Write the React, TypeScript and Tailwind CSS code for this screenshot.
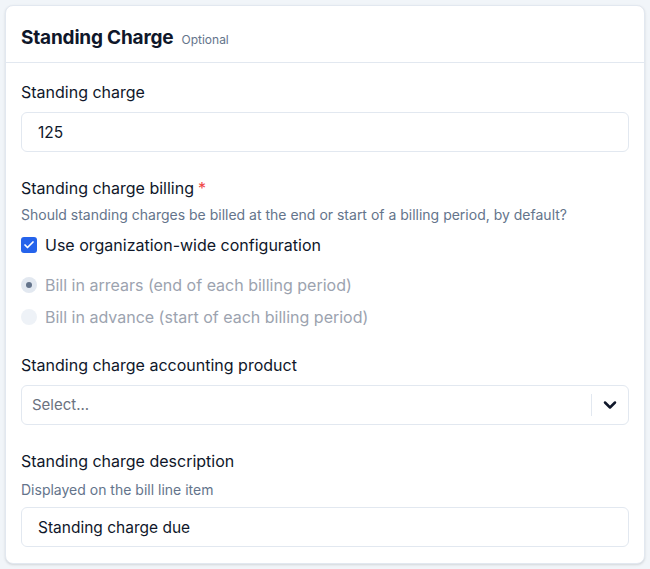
import React, { useState } from 'react';
import { ChevronDown, Check } from 'lucide-react';

const Label: React.FC<{ children: React.ReactNode; required?: boolean }> = ({ children, required }) => (
  <label className="block text-[16px] leading-6 text-[#0f172a]">
    {children}
    {required && <span className="ml-1 text-[#ef4444]">*</span>}
  </label>
);

const App: React.FC = () => {
  const [useOrg, setUseOrg] = useState(true);

  return (
    <div
      className="min-h-screen bg-[#f1f5f9] p-[5px]"
      style={{ fontFamily: 'Inter, "Noto Sans", sans-serif' }}
    >
      <div className="bg-white rounded-lg border border-[#e2e8f0] shadow-sm">
        <div className="h-[57px] pt-2 px-[15px] flex items-center gap-2 border-b border-[#e2e8f0]">
          <h2 className="text-[19px] font-bold text-[#0f172a] tracking-[-0.01em]">Standing Charge</h2>
          <span className="text-[12px] text-[#64748b] mt-1">Optional</span>
        </div>

        <div className="px-[15px] pt-[17px] pb-4">
          <Label>Standing charge</Label>
          <input
            defaultValue="125"
            className="mt-[8px] w-full h-10 px-4 rounded-md border border-[#e2e8f0] text-[15.5px] text-[#0f172a] outline-none"
          />

          <div className="mt-6">
            <Label required>Standing charge billing</Label>
            <p className="mt-[5px] text-[14px] leading-5 text-[#64748b]">
              Should standing charges be billed at the end or start of a billing period, by default?
            </p>
            <label className="mt-2 flex items-center gap-2 cursor-pointer">
              <button
                type="button"
                onClick={() => setUseOrg(!useOrg)}
                className={`w-4 h-4 rounded-[3px] flex items-center justify-center ${
                  useOrg ? 'bg-[#2563eb]' : 'border border-[#cbd5e1] bg-white'
                }`}
              >
                {useOrg && <Check className="w-3 h-3 text-white" strokeWidth={3.5} />}
              </button>
              <span className="text-[16px] leading-6 text-[#0f172a]">Use organization-wide configuration</span>
            </label>

            <div className="mt-4 space-y-2">
              <div className="flex items-center gap-2 h-6">
                <span className="w-4 h-4 rounded-full bg-[#e2e8f0] flex items-center justify-center">
                  <span className="w-[6px] h-[6px] rounded-full bg-[#64748b]" />
                </span>
                <span className="text-[16px] text-[#9ca3af]">Bill in arrears (end of each billing period)</span>
              </div>
              <div className="flex items-center gap-2 h-6">
                <span className="w-4 h-4 rounded-full bg-[#eef2f7]" />
                <span className="text-[16px] text-[#9ca3af]">Bill in advance (start of each billing period)</span>
              </div>
            </div>
          </div>

          <div className="mt-6">
            <Label>Standing charge accounting product</Label>
            <div className="mt-[8px] w-full h-10 pl-[10px] pr-2 rounded-md border border-[#e2e8f0] flex items-center">
              <span className="flex-1 text-[15px] text-[#6b7280]">Select...</span>
              <span className="w-px h-[22px] bg-[#e2e8f0]" />
              <span className="pl-[8px] flex items-center">
                <ChevronDown className="w-5 h-5 text-[#0f172a]" strokeWidth={3} />
              </span>
            </div>
          </div>

          <div className="mt-6">
            <Label>Standing charge description</Label>
            <p className="mt-[7px] text-[14px] leading-5 text-[#64748b]">Displayed on the bill line item</p>
            <input
              defaultValue="Standing charge due"
              className="mt-[7px] w-full h-10 px-4 rounded-md border border-[#e2e8f0] text-[15.5px] text-[#0f172a] outline-none"
            />
          </div>
        </div>
      </div>
    </div>
  );
};

export default App;
